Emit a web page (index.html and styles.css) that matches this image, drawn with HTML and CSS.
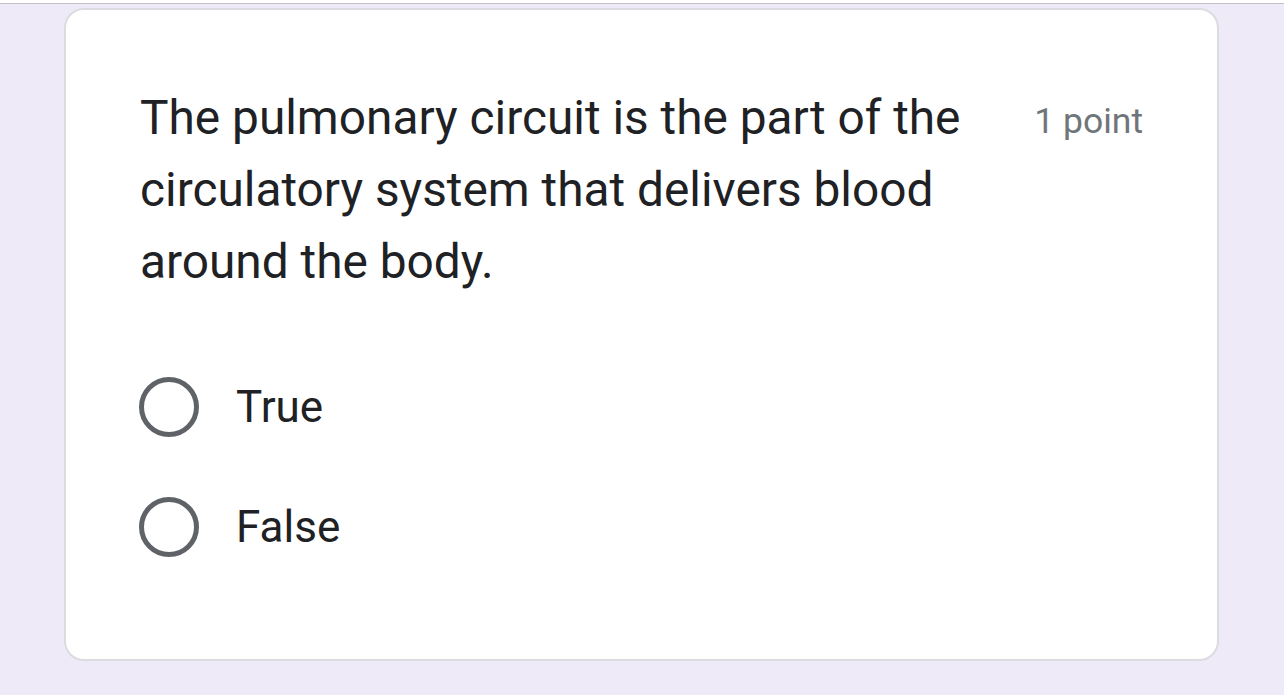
FILE: index.html
```html
<!DOCTYPE html>
<html>
<head>
<meta charset="utf-8">
<link rel="stylesheet" href="styles.css">
</head>
<body>
<div class="topbar"></div>
<div class="card">
  <div class="qrow">
    <div class="qtext">The pulmonary circuit is the part of the circulatory system that delivers blood around the body.</div>
    <div class="points">1 point</div>
  </div>
  <div class="options">
    <label class="option"><span class="radio"></span><span class="olabel">True</span></label>
    <label class="option"><span class="radio"></span><span class="olabel">False</span></label>
  </div>
</div>
</body>
</html>
```
FILE: styles.css
```css
html, body {
  margin: 0;
  padding: 0;
}
body {
  background: #efeaf8;
  font-family: Roboto, "Noto Sans", sans-serif;
  width: 1284px;
  height: 695px;
  overflow: hidden;
}
.topbar {
  height: 3px;
  background: #ffffff;
  border-bottom: 1px solid #c2c1c8;
}
.card {
  margin: 4px 65px 0 64px;
  height: 653px;
  box-sizing: border-box;
  background: #ffffff;
  border: 2px solid #dadce0;
  border-radius: 20px;
  padding: 72px 74px 0 74px;
}
.qrow {
  display: flex;
  align-items: flex-start;
}
.qtext {
  flex: 1;
  font-size: 47.8px;
  line-height: 72px;
  color: #202124;
}
.points {
  margin-left: 60px;
  font-size: 35.5px;
  line-height: 72px;
  color: #70757a;
  white-space: nowrap;
  padding-top: 3px;
}
.options {
  margin-top: 79px;
  display: flex;
  flex-direction: column;
  gap: 60px;
}
.option {
  display: flex;
  align-items: center;
  height: 60px;
}
.radio {
  width: 60px;
  height: 60px;
  box-sizing: border-box;
  border: 5px solid #5f6368;
  border-radius: 50%;
  flex: none;
  margin-left: -1px;
}
.olabel {
  margin-left: 37px;
  font-size: 44px;
  color: #202124;
}
```
